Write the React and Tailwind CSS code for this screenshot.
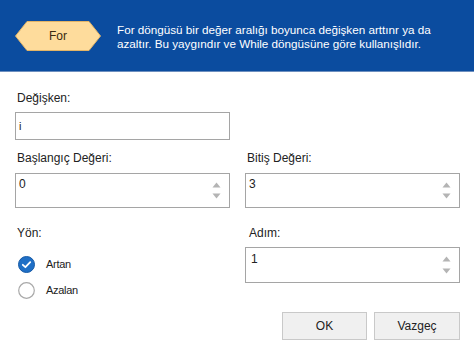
import { useState } from "react";

function Spinner() {
    return (
        <div className="flex flex-col justify-between h-full py-[8px] pr-[8px]">
            <svg width="9" height="6" viewBox="0 0 9 6">
                <polygon points="0.5,5.5 4.5,0.5 8.5,5.5" fill="#b4b4b4" />
            </svg>
            <svg width="9" height="6" viewBox="0 0 9 6">
                <polygon points="0.5,0.5 8.5,0.5 4.5,5.5" fill="#b4b4b4" />
            </svg>
        </div>
    );
}

function NumberField({ label, value }) {
    return (
        <div>
            <label className="block pl-[2px] leading-[14px] mb-[8px]">{label}</label>
            <div className="flex h-[35px] border border-[#a5a5a5] bg-white">
                <div className="flex-1 pl-[3px] pt-[3px] leading-[14px]">{value}</div>
                <Spinner />
            </div>
        </div>
    );
}

function Radio({ checked, label, onClick }) {
    return (
        <button type="button" onClick={onClick} className="flex items-center gap-[11px] h-[17px]">
            {checked ? (
                <svg width="17" height="17" viewBox="0 0 17 17">
                    <circle cx="8.5" cy="8.5" r="8" fill="#1f6fc6" stroke="#165aa6" />
                    <path d="M4.8 8.8 L7.4 11.2 L12.2 6.2" fill="none" stroke="#fff" strokeWidth="1.8" strokeLinecap="round" strokeLinejoin="round" />
                </svg>
            ) : (
                <svg width="17" height="17" viewBox="0 0 17 17">
                    <circle cx="8.5" cy="8.5" r="7.8" fill="#fff" stroke="#a9a9a9" strokeWidth="1.2" />
                </svg>
            )}
            <span className="text-[11px] tracking-[-0.3px] text-[#222]">{label}</span>
        </button>
    );
}

export default function App() {
    const [dir, setDir] = useState("artan");

    return (
        <div className="w-[474px] h-[345px] bg-white text-[12px] text-[#222] font-['Liberation_Sans',Arial,sans-serif] overflow-hidden">
            <div className="h-[72px] bg-[#0b4c9f] border-b border-[#6d8fbf] flex items-center pl-[15px]">
                <div className="relative w-[86px] h-[30px] shrink-0">
                    <svg className="absolute inset-0" width="86" height="30" viewBox="0 0 86 30">
                        <polygon points="0.5,15 12,0.5 74,0.5 85.5,15 74,29.5 12,29.5" fill="#fedc9c" stroke="#e3b466" />
                    </svg>
                    <span className="absolute inset-0 flex items-center justify-center text-[12px] text-[#3b2a12]">For</span>
                </div>
                <p className="ml-[16px] text-white text-[11.7px] leading-[14px] mt-[2px]">
                    For döngüsü bir değer aralığı boyunca değişken arttınr ya da
                    <br />
                    azaltır. Bu yaygındır ve While döngüsüne göre kullanışlıdır.
                </p>
            </div>

            <div className="px-[15px] pt-[19px]">
                <div className="w-[215px]">
                    <label className="block pl-[2px] leading-[14px] mb-[7px]">Değişken:</label>
                    <div className="h-[28px] border border-[#a5a5a5] pl-[3px] pt-[6px] text-[11px] leading-[14px]">i</div>
                </div>

                <div className="grid grid-cols-[215px_215px] gap-x-[15px] mt-[11px]">
                    <NumberField label="Başlangıç Değeri:" value="0" />
                    <NumberField label="Bitiş Değeri:" value="3" />
                </div>

                <div className="grid grid-cols-[215px_215px] gap-x-[15px] mt-[18px]">
                    <div>
                        <div className="pl-[2px] leading-[14px]">Yön:</div>
                        <div className="flex flex-col gap-[9px] mt-[16px] pl-[3px]">
                            <Radio checked={dir === "artan"} label="Artan" onClick={() => setDir("artan")} />
                            <Radio checked={dir === "azalan"} label="Azalan" onClick={() => setDir("azalan")} />
                        </div>
                    </div>
                    <div>
                        <label className="block pl-[4px] leading-[14px] mb-[7px]">Adım:</label>
                        <div className="flex h-[36px] border border-[#a5a5a5] bg-white">
                            <div className="flex-1 pl-[5px] pt-[4px] leading-[14px]">1</div>
                            <Spinner />
                        </div>
                        <div className="flex justify-end gap-[7px] mt-[29px]">
                            <button type="button" className="w-[85px] h-[28px] bg-[#f0f0f0] border border-[#c9c9c9] text-[12px] text-[#222]">
                                OK
                            </button>
                            <button type="button" className="w-[86px] h-[28px] bg-[#f0f0f0] border border-[#c9c9c9] text-[12px] text-[#222]">
                                Vazgeç
                            </button>
                        </div>
                    </div>
                </div>
            </div>
        </div>
    );
}
